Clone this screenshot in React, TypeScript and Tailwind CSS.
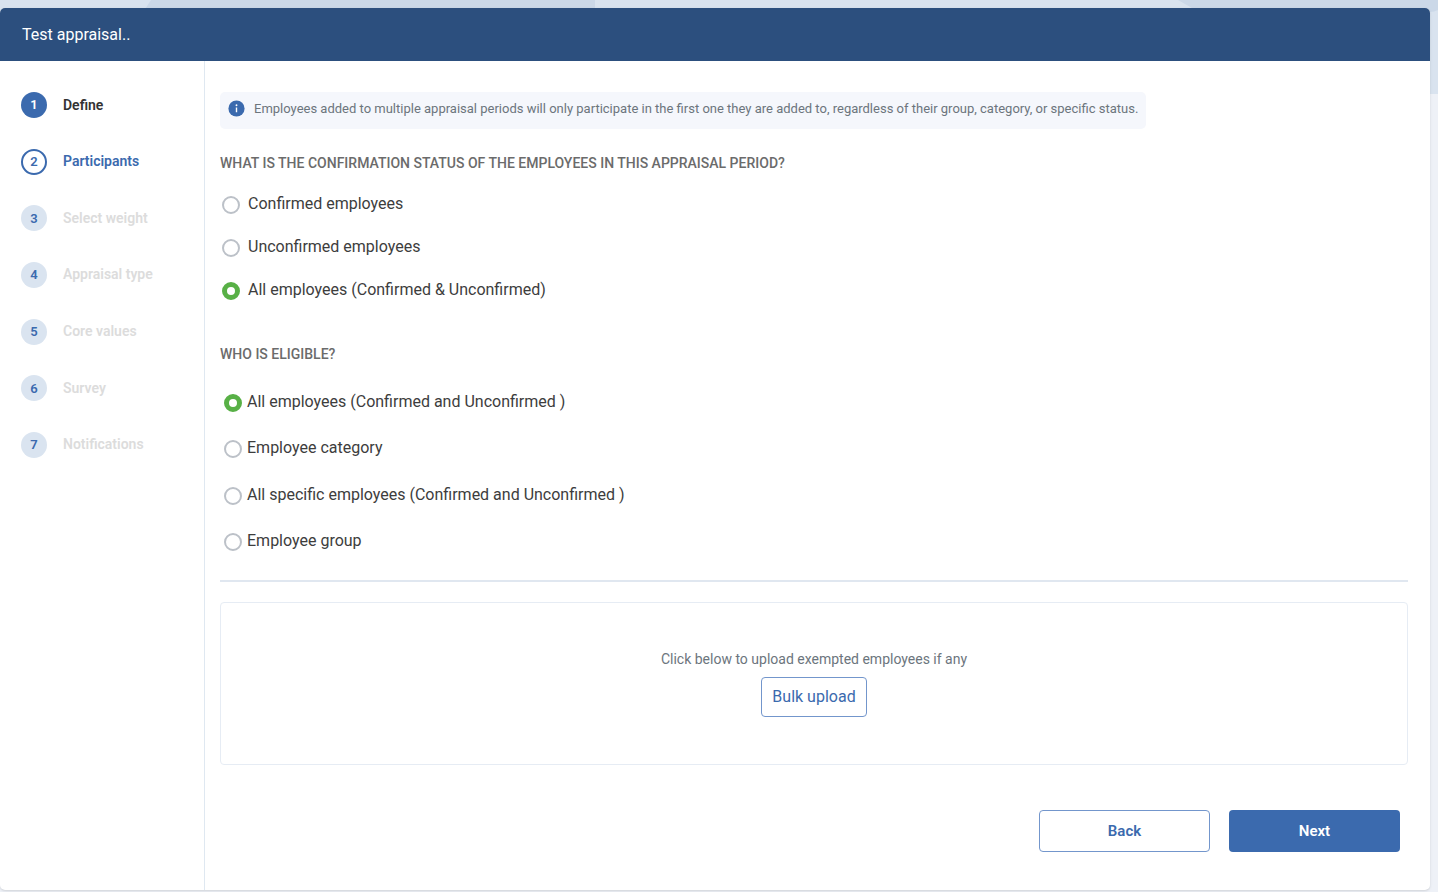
import { useState } from 'react';
import clsx from 'clsx';

const steps = ['Define', 'Participants', 'Select weight', 'Appraisal type', 'Core values', 'Survey', 'Notifications'];

const statuses = ['Confirmed employees', 'Unconfirmed employees', 'All employees (Confirmed & Unconfirmed)'];

const eligibility = [
  'All employees (Confirmed and Unconfirmed )',
  'Employee category',
  'All specific employees (Confirmed and Unconfirmed )',
  'Employee group',
];

const CURRENT_STEP = 1;

type RadioProps = {
  name: string;
  label: string;
  checked: boolean;
  onChange: () => void;
  className?: string;
};

const Radio = ({ name, label, checked, onChange, className }: RadioProps) => (
  <label className={clsx('flex h-6 w-fit items-center text-[#3d3d3d] cursor-pointer', className)}>
    <input
      type="radio"
      name={name}
      checked={checked}
      onChange={onChange}
      className="size-[18px] shrink-0 appearance-none rounded-full border-2 border-[#bcc1c8] bg-white checked:border-[5px] checked:border-[#58b046]"
    />
    <span className="pb-0.5 text-[16px] leading-6">{label}</span>
  </label>
);

const Step = ({ index, label }: { index: number; label: string }) => {
  const done = index < CURRENT_STEP;
  const active = index === CURRENT_STEP;

  return (
    <li className="flex items-center gap-4 text-[14px] font-semibold" aria-current={active ? 'step' : undefined}>
      <span
        className={clsx(
          'flex size-[26px] shrink-0 items-center justify-center rounded-full text-[13px]',
          done && 'bg-[#3b6aae] text-white',
          active && 'border-2 border-[#3b6aae] text-[#3b6aae]',
          !done && !active && 'bg-[#dae4f0] text-[#3b6aae]'
        )}
      >
        {index + 1}
      </span>
      <span className={clsx(done && 'text-[#333333]', active && 'text-[#3b6aae]', !done && !active && 'text-[#dcdcdc]')}>
        {label}
      </span>
    </li>
  );
};

const App = () => {
  const [status, setStatus] = useState(statuses[2]);
  const [eligible, setEligible] = useState(eligibility[0]);

  return (
    <div className="relative flex min-h-screen bg-[#eef1f7] pt-2 pr-2 pb-0.5 font-[Roboto,sans-serif]">
      {/* Banner artwork behind the card */}
      <svg
        className="absolute inset-x-0 top-0 h-[94px] w-full"
        viewBox="0 0 1438 94"
        preserveAspectRatio="none"
        aria-hidden="true"
      >
        <rect width="1438" height="94" fill="#d9e3ef" />
        <path d="M151 0H595V94H90Z" fill="#cbd8e8" />
        <path d="M1178 0H1438V10Q1434 12 1430 12L1192 8Z" fill="#cbd8e8" />
      </svg>

      <div className="relative flex grow flex-col overflow-hidden rounded-[5px] bg-white shadow-sm">
        <header className="flex h-[53px] items-center bg-[#2c4f7e] px-[22px]">
          <h1 className="text-[16px] text-white">Test appraisal..</h1>
        </header>

        <div className="flex grow">
          <nav className="w-[205px] shrink-0 border-r border-[#dfe8f1] px-[21px] pt-[31px]" aria-label="Steps">
            <ol className="flex h-[366px] flex-col justify-between">
              {steps.map((label, index) => (
                <Step key={label} index={index} label={label} />
              ))}
            </ol>
          </nav>

          <main className="grow pt-[31px] pr-[22px] pb-[38px] pl-[15px]">
            <div className="flex min-h-[37px] w-fit items-center gap-[9px] rounded-[5px] bg-[#f5f7fc] px-2 pb-1 text-[13px] text-[#6c757d]">
              <svg className="size-[17px] shrink-0" viewBox="0 0 16 16" aria-hidden="true">
                <circle cx="8" cy="8" r="7.6" fill="#3b6aae" />
                <circle cx="8" cy="4.9" r="0.9" fill="#fff" />
                <path d="M8 7v4.6" stroke="#fff" strokeWidth="1.3" />
              </svg>
              <p>
                Employees added to multiple appraisal periods will only participate in the first one they are added to,
                regardless of their group, category, or specific status.
              </p>
            </div>

            <fieldset>
              <legend className="pt-6 text-[14px] leading-5 font-medium text-[#6b6b6b] uppercase">
                What is the confirmation status of the employees in this appraisal period?
              </legend>
              <div className="mt-5 flex flex-col gap-[19px] pl-0.5">
                {statuses.map((label) => (
                  <Radio
                    key={label}
                    name="status"
                    label={label}
                    checked={status === label}
                    onChange={() => setStatus(label)}
                    className="gap-2"
                  />
                ))}
              </div>
            </fieldset>

            <fieldset>
              <legend className="pt-[41px] text-[14px] leading-5 font-medium text-[#6b6b6b] uppercase">
                Who is eligible?
              </legend>
              <div className="mt-[27px] flex h-[163px] flex-col justify-between pl-1">
                {eligibility.map((label) => (
                  <Radio
                    key={label}
                    name="eligibility"
                    label={label}
                    checked={eligible === label}
                    onChange={() => setEligible(label)}
                    className="gap-[5px]"
                  />
                ))}
              </div>
            </fieldset>

            <hr className="mt-[26px] border-t-2 border-[#e0e7f0]" />

            <section className="mt-5 flex h-[163px] flex-col items-center rounded border border-[#e6ecf4] pt-[46px]">
              <p className="text-[14px] leading-5 text-[#6c757d]">Click below to upload exempted employees if any</p>
              <button
                type="button"
                className="mt-2 h-10 rounded border border-[#7396cc] px-2.5 text-[16px] text-[#3b6aae]"
              >
                Bulk upload
              </button>
            </section>

            {/* Navigation */}
            <div className="mt-[45px] flex justify-end gap-[19px] pr-2 text-[15px] font-semibold">
              <button type="button" className="h-[42px] w-[171px] rounded border border-[#7396cc] text-[#3b6aae]">
                Back
              </button>
              <button type="button" className="h-[42px] w-[171px] rounded bg-[#3b6aae] text-white">
                Next
              </button>
            </div>
          </main>
        </div>
      </div>
    </div>
  );
};

export default App;
